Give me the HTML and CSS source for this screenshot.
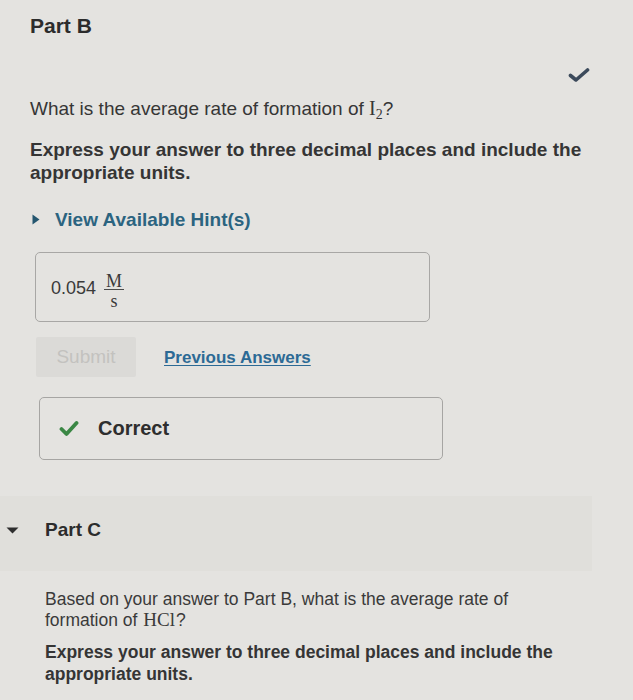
FILE: index.html
```html
<!DOCTYPE html>
<html lang="en">
<head>
<meta charset="utf-8">
<title>Part B</title>
<link rel="stylesheet" href="styles.css">
</head>
<body>
<section class="part-b">
  <h2 class="part-title">Part B</h2>
  <div class="status-row">
    <svg class="done-check" width="22" height="14" viewBox="0 0 22 14" aria-hidden="true">
      <path d="M2.5 7.5 L8 12 L19.5 2" fill="none" stroke="#3c4a5b" stroke-width="3.6" stroke-linecap="round" stroke-linejoin="round"/>
    </svg>
  </div>
  <p class="question">What is the average rate of formation of <span class="math">I<sub>2</sub></span>?</p>
  <p class="instruction">Express your answer to three decimal places and include the appropriate units.</p>
  <div class="hint">
    <svg class="hint-arrow" width="8" height="11" viewBox="0 0 8 11" aria-hidden="true">
      <path d="M0.5 0.5 L7.5 5.5 L0.5 10.5 Z" fill="#24566f"/>
    </svg>
    <span>View Available Hint(s)</span>
  </div>
  <div class="answer-box">
    <span class="value">0.054</span>
    <span class="fraction"><span class="num">M</span><span class="den">s</span></span>
  </div>
  <div class="actions">
    <button class="submit" type="button">Submit</button>
    <a class="prev-link" href="#">Previous Answers</a>
  </div>
  <div class="feedback">
    <svg class="ok-check" width="20" height="17" viewBox="0 0 20 17" aria-hidden="true">
      <path d="M2.5 9 L7.5 14 L17.5 3" fill="none" stroke="#3a8744" stroke-width="3.8" stroke-linecap="round" stroke-linejoin="round"/>
    </svg>
    <span class="feedback-text">Correct</span>
  </div>
</section>
<section class="part-c">
  <div class="part-c-header">
    <svg class="collapse-arrow" width="13" height="7" viewBox="0 0 13 7" aria-hidden="true">
      <path d="M0.5 0.5 L12.5 0.5 L6.5 6.5 Z" fill="#2e2e2e"/>
    </svg>
    <h2 class="part-c-title">Part C</h2>
  </div>
  <div class="part-c-body">
    <p class="question-c">Based on your answer to Part B, what is the average rate of <span class="keep">formation of <span class="math-c">HCl</span>?</span></p>
    <p class="instruction-c">Express your answer to three decimal places and include the appropriate units.</p>
  </div>
</section>
</body>
</html>
```

FILE: styles.css
```css
* { box-sizing: border-box; }

html, body {
  margin: 0;
  padding: 0;
  background: #e4e3e0;
}

body {
  font-family: "Liberation Sans", Arial, sans-serif;
  color: #333333;
  width: 633px;
  height: 700px;
  overflow: hidden;
}

.part-b {
  padding: 14px 33px 0 30px;
}

.part-title {
  margin: 0;
  font-size: 21px;
  line-height: 24px;
  font-weight: bold;
  color: #2c2c2c;
}

.status-row {
  display: flex;
  justify-content: flex-end;
  margin-top: 30px;
  height: 13px;
  padding-right: 10px;
}

.done-check { display: block; }

.question {
  margin: 16px 0 0 0;
  font-size: 19px;
  line-height: 23px;
  color: #363636;
}

.math {
  font-family: "Liberation Serif", "Times New Roman", serif;
  font-size: 20px;
  line-height: 0;
}

.math sub {
  font-size: 14px;
  line-height: 0;
  vertical-align: -4px;
}

.instruction {
  margin: 18px 0 0 0;
  font-size: 19px;
  line-height: 23px;
  font-weight: bold;
  color: #353535;
}

.hint {
  margin-top: 24px;
  display: flex;
  align-items: center;
  gap: 15px;
  padding-left: 2px;
  font-size: 19px;
  line-height: 23px;
  font-weight: bold;
  color: #2b6480;
}

.hint-arrow { display: block; }

.answer-box {
  margin: 21px 0 0 5px;
  width: 395px;
  height: 70px;
  border: 1.5px solid #a8a7a5;
  border-radius: 5px;
  display: flex;
  align-items: center;
  gap: 8px;
  padding-left: 15px;
  padding-top: 2px;
}

.value {
  font-size: 18px;
  color: #3a3a3a;
}

.fraction {
  display: inline-flex;
  flex-direction: column;
  align-items: center;
  font-family: "Liberation Serif", "Times New Roman", serif;
  font-size: 18px;
  line-height: 13px;
  color: #3a3a3a;
  padding-top: 6px;
}

.fraction .num {
  padding: 0 2px 1px 2px;
  border-bottom: 1.5px solid #4a4a4a;
}

.fraction .den {
  padding-top: 5px;
}

.actions {
  margin: 15px 0 0 6px;
  display: flex;
  align-items: center;
  gap: 28px;
}

.submit {
  width: 100px;
  height: 40px;
  border: none;
  border-radius: 2px;
  background: #dbdad7;
  color: #c3c2bf;
  font-family: "Liberation Sans", Arial, sans-serif;
  font-size: 19px;
  padding: 0;
}

.prev-link {
  font-size: 17px;
  font-weight: bold;
  color: #2c6a95;
  text-decoration: underline;
  text-underline-offset: 2px;
  padding-top: 2px;
}

.feedback {
  margin: 20px 0 0 9px;
  width: 404px;
  height: 63px;
  border: 1.5px solid #a6a5a3;
  border-radius: 5px;
  display: flex;
  align-items: center;
  gap: 19px;
  padding-left: 19px;
}

.ok-check { display: block; }

.feedback-text {
  font-size: 20px;
  font-weight: bold;
  color: #2e2e2e;
}

.part-c {
  margin-top: 36px;
}

.part-c-header {
  width: 592px;
  height: 75px;
  background: #e0dfdb;
  display: flex;
  align-items: flex-start;
  padding: 23px 0 0 6px;
  gap: 26px;
}

.collapse-arrow {
  display: block;
  margin-top: 8px;
}

.part-c-title {
  margin: 0;
  font-size: 19px;
  line-height: 22px;
  font-weight: bold;
  color: #2c2c2c;
}

.part-c-body {
  padding-left: 45px;
  width: 570px;
}

.question-c {
  margin: 18px 0 0 0;
  font-size: 17.5px;
  line-height: 21px;
  color: #3a3a3a;
}

.keep {
  white-space: nowrap;
}

.math-c {
  font-family: "Liberation Serif", "Times New Roman", serif;
  font-size: 19px;
  line-height: 0;
  padding: 0 1px;
}

.instruction-c {
  margin: 10px 0 0 0;
  font-size: 17.5px;
  line-height: 22px;
  font-weight: bold;
  color: #353535;
}
```
